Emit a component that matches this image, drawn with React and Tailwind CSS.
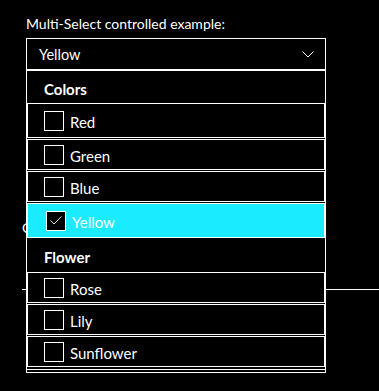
import React from "react";

function Check({ checked }) {
  return (
    <div className="w-[20px] h-[20px] border border-white bg-black flex items-center justify-center shrink-0">
      {checked && (
        <svg width="12" height="9" viewBox="0 0 12 9" fill="none">
          <polyline points="0.5,4.5 4,8 11.5,0.5" stroke="#e5e5e5" strokeWidth="1" />
        </svg>
      )}
    </div>
  );
}

function Item({ label, h, mt, checked }) {
  return (
    <div
      className={`${h} ${mt} border flex items-center gap-[6px] ${
        checked ? "border-white bg-[#1aebff] pl-[18px]" : "border-white bg-black pl-[16px]"
      }`}
    >
      <Check checked={checked} />
      <span className="mt-[3px] text-[15px] leading-5 text-white">{label}</span>
    </div>
  );
}

export default function App() {
  return (
    <div className="relative w-[379px] h-[391px] bg-black overflow-hidden text-white font-['Lato','Noto_Sans',sans-serif]">
      <div className="pl-[26px] pt-[14px]">
        <div className="text-[14px] leading-5 h-[20px]">Multi-Select controlled example:</div>
        <div className="mt-[4px] w-[300px] h-[32px] border border-white flex items-center justify-between pl-[12px] pr-[11px]">
          <span className="mt-[2px] text-[14.5px] leading-5">Yellow</span>
          <svg width="12" height="7" viewBox="0 0 12 7" fill="none">
            <polyline points="0.5,0.5 6,6 11.5,0.5" stroke="#ffffff" strokeWidth="1" />
          </svg>
        </div>
      </div>
      <div className="pl-[22px] mt-[148px] text-[14px] leading-5 h-[20px]">C</div>
      <div className="ml-[22px] mt-[51px] h-px bg-white" />

      <div className="absolute left-[26px] top-[70px] w-[300px] h-[303px] border border-white bg-black flex flex-col">
        <div className="h-[32px] flex items-center pl-[17px]">
          <span className="mt-[3px] text-[15px] font-bold leading-5">Colors</span>
        </div>
        <Item label="Red" h="h-[35px]" mt="mt-0" />
        <Item label="Green" h="h-[31px]" mt="mt-[1px]" />
        <Item label="Blue" h="h-[31px]" mt="mt-[1px]" />
        <Item label="Yellow" h="h-[35px]" mt="mt-[1px]" checked />
        <div className="h-[34px] flex items-center pl-[17px]">
          <span className="mt-[3px] text-[15px] font-bold leading-5">Flower</span>
        </div>
        <Item label="Rose" h="h-[31px]" mt="mt-0" />
        <Item label="Lily" h="h-[31px]" mt="mt-[1px]" />
        <Item label="Sunflower" h="h-[31px]" mt="mt-[1px]" />
        <div className="mt-[2px] h-px bg-white" />
      </div>
    </div>
  );
}
